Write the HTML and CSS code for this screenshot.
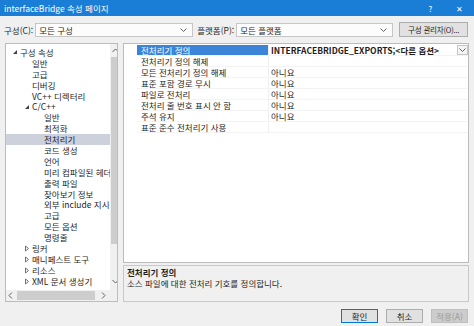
FILE: index.html
```html
<!DOCTYPE html>
<html lang="ko">
<head>
    <meta charset="UTF-8">
    <title>interfaceBridge 속성 페이지</title>
    <link rel="stylesheet" href="styles.css">
</head>
<body>
<div class="dialog">

    <div class="titlebar">
        <span class="title">interfaceBridge 속성 페이지</span>
        <span class="caption-btn help">?</span>
        <span class="caption-btn close">✕</span>
    </div>

    <div class="toolbar">
        <span class="label">구성(C):</span>
        <div class="combo combo-config">
            <span>모든 구성</span>
            <svg class="chev" width="7" height="4" viewBox="0 0 7 4"><path d="M0.5 0.5 L3.5 3.5 L6.5 0.5" fill="none" stroke="#606060" stroke-width="1"/></svg>
        </div>
        <span class="label">플랫폼(P):</span>
        <div class="combo combo-platform">
            <span>모든 플랫폼</span>
            <svg class="chev" width="7" height="4" viewBox="0 0 7 4"><path d="M0.5 0.5 L3.5 3.5 L6.5 0.5" fill="none" stroke="#606060" stroke-width="1"/></svg>
        </div>
        <button class="btn manager">구성 관리자(O)...</button>
    </div>

    <div class="main">
        <div class="tree">
            <ul class="tree-list">
                <li class="lvl0 twig"><span class="twisty"><svg width="6" height="6" viewBox="0 0 6 6"><path d="M5 1 L5 5 L1 5 Z" fill="#404040"/></svg></span>구성 속성</li>
                <li class="lvl1">일반</li>
                <li class="lvl1">고급</li>
                <li class="lvl1">디버깅</li>
                <li class="lvl1">VC++ 디렉터리</li>
                <li class="lvl1 twig"><span class="twisty"><svg width="6" height="6" viewBox="0 0 6 6"><path d="M5 1 L5 5 L1 5 Z" fill="#404040"/></svg></span>C/C++</li>
                <li class="lvl2">일반</li>
                <li class="lvl2">최적화</li>
                <li class="lvl2 selected">전처리기</li>
                <li class="lvl2">코드 생성</li>
                <li class="lvl2">언어</li>
                <li class="lvl2">미리 컴파일된 헤더</li>
                <li class="lvl2">출력 파일</li>
                <li class="lvl2">찾아보기 정보</li>
                <li class="lvl2">외부 include 지시문</li>
                <li class="lvl2">고급</li>
                <li class="lvl2">모든 옵션</li>
                <li class="lvl2">명령줄</li>
                <li class="lvl1 twig"><span class="twisty"><svg width="6" height="7" viewBox="0 0 6 7"><path d="M1.5 1 L4.5 3.5 L1.5 6 Z" fill="none" stroke="#707070" stroke-width="1"/></svg></span>링커</li>
                <li class="lvl1 twig"><span class="twisty"><svg width="6" height="7" viewBox="0 0 6 7"><path d="M1.5 1 L4.5 3.5 L1.5 6 Z" fill="none" stroke="#707070" stroke-width="1"/></svg></span>매니페스트 도구</li>
                <li class="lvl1 twig"><span class="twisty"><svg width="6" height="7" viewBox="0 0 6 7"><path d="M1.5 1 L4.5 3.5 L1.5 6 Z" fill="none" stroke="#707070" stroke-width="1"/></svg></span>리소스</li>
                <li class="lvl1 twig"><span class="twisty"><svg width="6" height="7" viewBox="0 0 6 7"><path d="M1.5 1 L4.5 3.5 L1.5 6 Z" fill="none" stroke="#707070" stroke-width="1"/></svg></span>XML 문서 생성기</li>
            </ul>

            <div class="vscroll">
                <svg class="arrow" width="7" height="5" viewBox="0 0 7 5"><path d="M0.5 4 L3.5 1 L6.5 4" fill="none" stroke="#606060" stroke-width="1"/></svg>
                <div class="thumb-v"></div>
                <svg class="arrow" width="7" height="5" viewBox="0 0 7 5"><path d="M0.5 1 L3.5 4 L6.5 1" fill="none" stroke="#606060" stroke-width="1"/></svg>
            </div>
            <div class="hscroll">
                <svg class="arrow" width="5" height="7" viewBox="0 0 5 7"><path d="M4 0.5 L1 3.5 L4 6.5" fill="none" stroke="#606060" stroke-width="1"/></svg>
                <div class="thumb-h"></div>
                <svg class="arrow" width="5" height="7" viewBox="0 0 5 7"><path d="M1 0.5 L4 3.5 L1 6.5" fill="none" stroke="#606060" stroke-width="1"/></svg>
            </div>
            <div class="corner"></div>
        </div>

        <div class="side">
            <div class="grid">
                <div class="row selected">
                    <span class="name">전처리기 정의</span>
                    <span class="value bold">INTERFACEBRIDGE_EXPORTS;&lt;다른 옵션&gt;
                        <span class="drop"><svg width="7" height="4" viewBox="0 0 7 4"><path d="M0.5 0.5 L3.5 3.5 L6.5 0.5" fill="none" stroke="#606060" stroke-width="1"/></svg></span>
                    </span>
                </div>
                <div class="row"><span class="name">전처리기 정의 해제</span><span class="value"></span></div>
                <div class="row"><span class="name">모든 전처리기 정의 해제</span><span class="value">아니요</span></div>
                <div class="row"><span class="name">표준 포함 경로 무시</span><span class="value">아니요</span></div>
                <div class="row"><span class="name">파일로 전처리</span><span class="value">아니요</span></div>
                <div class="row"><span class="name">전처리 줄 번호 표시 안 함</span><span class="value">아니요</span></div>
                <div class="row"><span class="name">주석 유지</span><span class="value">아니요</span></div>
                <div class="row"><span class="name">표준 준수 전처리기 사용</span><span class="value"></span></div>
            </div>
            <div class="desc">
                <div class="desc-title">전처리기 정의</div>
                <div class="desc-text">소스 파일에 대한 전처리 기호를 정의합니다.</div>
            </div>
        </div>
    </div>

    <div class="footer">
        <button class="btn default">확인</button>
        <button class="btn">취소</button>
        <button class="btn disabled">적용(A)</button>
    </div>

</div>
</body>
</html>
```

FILE: styles.css
```css
* {
    box-sizing: border-box;
}
body {
    margin: 0;
    background: #f0f0f0;
    font-family: "Noto Sans CJK KR", "Noto Sans", sans-serif;
    font-size: 8.5px;
    color: #1e1e1e;
}
.dialog {
    width: 474px;
    height: 326px;
    display: flex;
    flex-direction: column;
}

/* title bar */
.titlebar {
    height: 16px;
    background: #1a7dd6;
    color: #fff;
    display: flex;
    align-items: center;
    padding: 0 0 0 4px;
}
.title {
    flex: 1;
    font-size: 8.5px;
}
.caption-btn {
    width: 29px;
    text-align: center;
    font-size: 8px;
}

/* configuration bar */
.toolbar {
    height: 27px;
    display: flex;
    align-items: center;
    padding: 0 5px 0 4px;
}
.label {
    white-space: nowrap;
}
.combo {
    height: 14px;
    background: #fcfcfc;
    border: 1px solid #c6c6c6;
    display: flex;
    align-items: center;
    padding: 0 5px 0 3px;
}
.combo span {
    flex: 1;
}
.combo-config {
    width: 158px;
    margin: 0 4px 0 2px;
}
.combo-platform {
    width: 157px;
    margin: 0 6px 0 2px;
}
.btn {
    height: 15px;
    padding: 0;
    font-family: inherit;
    font-size: 8.5px;
    color: #1e1e1e;
    background: #e1e1e1;
    border: 1px solid #adadad;
    white-space: nowrap;
}
.manager {
    width: 69px;
    font-size: 7.5px;
    letter-spacing: -0.2px;
}

/* tree + grid */
.main {
    height: 259px;
    display: flex;
    gap: 5px;
    padding: 0 5px;
}
.tree {
    width: 113px;
    background: #fff;
    border: 1px solid #bcbcbc;
    display: grid;
    grid-template-columns: 1fr 11px;
    grid-template-rows: 1fr 11px;
    overflow: hidden;
}
.tree-list {
    list-style: none;
    margin: 0;
    padding: 3px 0 0 0;
    overflow: hidden;
}
.tree-list li {
    height: 10.9px;
    line-height: 10.9px;
    white-space: nowrap;
    display: flex;
    align-items: center;
}
.twisty {
    width: 8px;
    display: flex;
    align-items: center;
}
.lvl0.twig { padding-left: 6px; }
.lvl1 { padding-left: 26px; }
.lvl1.twig { padding-left: 18px; }
.lvl2 { padding-left: 38px; }
.tree-list li.selected {
    background: #cdd1dc;
}
.vscroll {
    background: #f0f0f0;
    display: flex;
    flex-direction: column;
    align-items: center;
    padding: 4px 0 6px;
}
.thumb-v {
    width: 10px;
    height: 187px;
    margin: 4px 0 auto;
    background: #cdcdcd;
}
.hscroll {
    background: #f0f0f0;
    display: flex;
    align-items: center;
    padding: 0 4px 0 2px;
}
.thumb-h {
    width: 78px;
    height: 9px;
    margin: 0 6px 0 4px;
    background: #cdcdcd;
}
.corner {
    background: #f0f0f0;
}

.side {
    flex: 1;
    display: flex;
    flex-direction: column;
    gap: 2px;
}
.grid {
    height: 220px;
    background: #fff;
    border: 1px solid #bcbcbc;
    padding: 1px 0 0 13px;
}
.row {
    height: 11px;
    display: flex;
}
.row .name {
    width: 132px;
    padding-left: 4px;
    line-height: 10px;
    border-right: 1px solid #efefef;
    border-bottom: 1px solid #f3f3f3;
    white-space: nowrap;
}
.row .value {
    flex: 1;
    padding-left: 2px;
    line-height: 10px;
    border-bottom: 1px solid #f3f3f3;
    display: flex;
    white-space: nowrap;
}
.row.selected .name {
    background: #3b84d8;
    color: #fff;
}
.bold {
    font-weight: bold;
}
.drop {
    margin-left: auto;
    width: 11px;
    height: 10px;
    border: 1px solid #c6c6c6;
    background: #f4f4f4;
    display: flex;
    align-items: center;
    justify-content: center;
}

.desc {
    flex: 1;
    border: 1px solid #c8c8c8;
    padding: 1px 3px;
    line-height: 11px;
}
.desc-title {
    font-weight: bold;
}

/* bottom buttons */
.footer {
    flex: 1;
    display: flex;
    justify-content: flex-end;
    align-items: center;
    gap: 8px;
    padding: 3px 6px 0 0;
}
.footer .btn {
    width: 37px;
    height: 14px;
}
.btn.default {
    border-color: #0078d7;
}
.btn.disabled {
    color: #9a9a9a;
    background: #cccccc;
    border-color: #bfbfbf;
}
```
